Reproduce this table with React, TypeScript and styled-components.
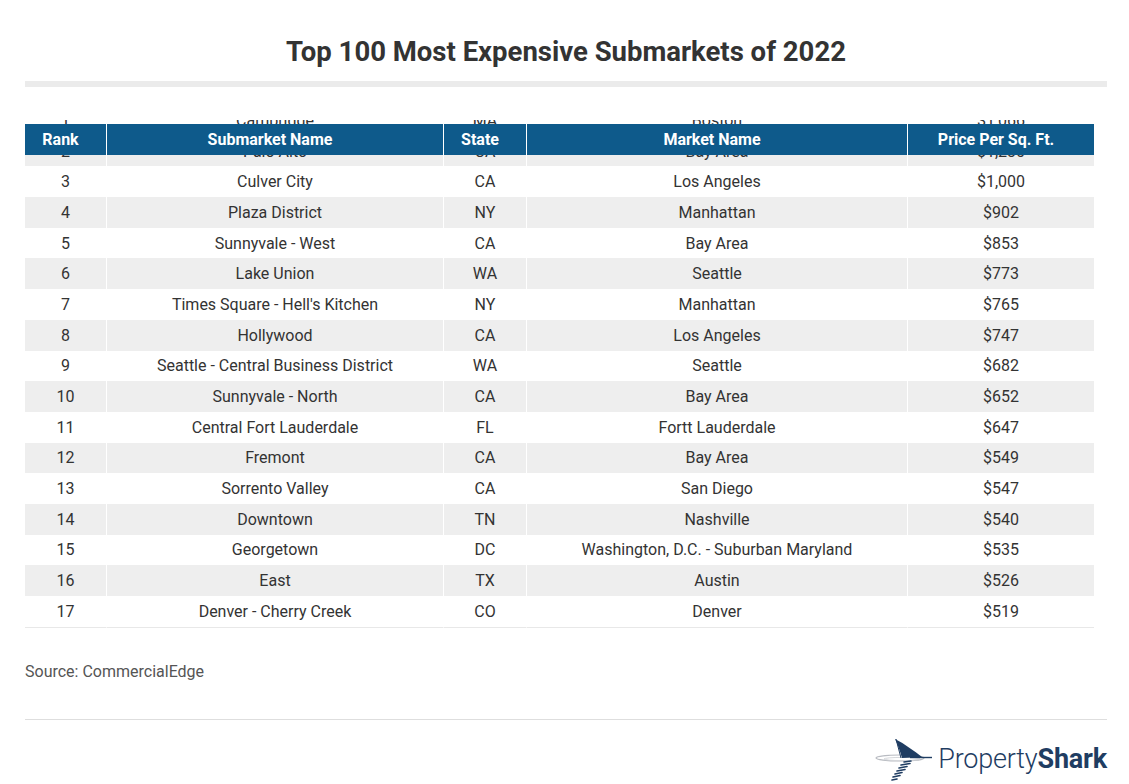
import { useLayoutEffect, useRef } from "react";
import styled, { createGlobalStyle } from "styled-components";

const GlobalStyle = createGlobalStyle`
  body {
    margin: 0;
    background: #fff;
    font-family: Roboto, "Liberation Sans", sans-serif;
    color: #333;
  }
`;

const Page = styled.div`
  width: 1082px;
  padding: 36px 22px 0 25px;
`;

const Title = styled.h1`
  margin: 0;
  font-size: 27.5px;
  line-height: 32px;
  font-weight: 700;
  text-align: center;
  color: #333;
`;

const TitleRule = styled.div`
  height: 6px;
  margin-top: 13px;
  background: #ebebeb;
`;

const Scroller = styled.div`
  margin-top: 33px;
  height: 508px;
  overflow-y: auto;
  scrollbar-width: none;
  &::-webkit-scrollbar {
    display: none;
  }
`;

const Table = styled.table`
  width: 1069px;
  table-layout: fixed;
  border-collapse: separate;
  border-spacing: 0;
  font-size: 16px;
`;

const HeadCell = styled.th`
  position: sticky;
  top: 4px;
  height: 31px;
  padding: 0 10px 0 0;
  background: #0e5a8b;
  color: #fff;
  font-weight: 700;
  text-align: center;
  border-left: 1px solid #fff;
  &:first-child {
    border-left: none;
  }
`;

const Row = styled.tr<{ $striped: boolean }>`
  background: ${(p) => (p.$striped ? "#eeeeee" : "#ffffff")};
`;

const Cell = styled.td<{ $last: boolean }>`
  height: 30.7px;
  padding: 0;
  text-align: center;
  color: #333;
  border-left: 1px solid #fff;
  border-bottom: ${(p) => (p.$last ? "1px solid #e8e8e8" : "none")};
  &:first-child {
    border-left: none;
  }
`;

const Source = styled.p`
  margin: 34px 0 0;
  font-size: 16px;
  line-height: 19px;
  color: #555;
`;

const FooterRule = styled.div`
  height: 1px;
  margin-top: 38px;
  background: #dedede;
`;

const Footer = styled.div`
  display: flex;
  justify-content: flex-end;
  padding-top: 18px;
`;

const Logo = styled.div`
  display: flex;
  align-items: center;
  gap: 4px;
  color: #1f3d62;
`;

const LogoText = styled.span`
  font-size: 27px;
  line-height: 27px;
  font-weight: 300;
  letter-spacing: -0.2px;
  margin-bottom: 4px;
  b {
    font-weight: 700;
  }
`;

const columns = [
  { label: "Rank", width: 81 },
  { label: "Submarket Name", width: 337 },
  { label: "State", width: 83 },
  { label: "Market Name", width: 381 },
  { label: "Price Per Sq. Ft.", width: 187 },
];

const rows: [number, string, string, string, string][] = [
  [1, "Cambridge", "MA", "Boston", "$1,066"],
  [2, "Palo Alto", "CA", "Bay Area", "$1,230"],
  [3, "Culver City", "CA", "Los Angeles", "$1,000"],
  [4, "Plaza District", "NY", "Manhattan", "$902"],
  [5, "Sunnyvale - West", "CA", "Bay Area", "$853"],
  [6, "Lake Union", "WA", "Seattle", "$773"],
  [7, "Times Square - Hell's Kitchen", "NY", "Manhattan", "$765"],
  [8, "Hollywood", "CA", "Los Angeles", "$747"],
  [9, "Seattle - Central Business District", "WA", "Seattle", "$682"],
  [10, "Sunnyvale - North", "CA", "Bay Area", "$652"],
  [11, "Central Fort Lauderdale", "FL", "Fortt Lauderdale", "$647"],
  [12, "Fremont", "CA", "Bay Area", "$549"],
  [13, "Sorrento Valley", "CA", "San Diego", "$547"],
  [14, "Downtown", "TN", "Nashville", "$540"],
  [15, "Georgetown", "DC", "Washington, D.C. - Suburban Maryland", "$535"],
  [16, "East", "TX", "Austin", "$526"],
  [17, "Denver - Cherry Creek", "CO", "Denver", "$519"],
];

const SharkMark = () => (
  <svg width="60" height="46" viewBox="0 0 60 46">
    <ellipse cx="26" cy="20" rx="24" ry="3" fill="none" stroke="#b9bcc2" strokeWidth="1.2" />
    <ellipse cx="28" cy="21" rx="18" ry="1.6" fill="none" stroke="#d5d7db" strokeWidth="1" />
    <path d="M21 1 C31 6 40 13 48 19 L28 20 C26 13 24 7 21 1 Z" fill="#1f3d62" />
    <path d="M22 1 L27 20" stroke="#1f3d62" strokeWidth="1" />
    <path d="M36 19.5 H58" stroke="#1f3d62" strokeWidth="1.4" />
    <g stroke="#1f3d62" strokeWidth="1.6" strokeLinecap="round">
      <path d="M30 24 L37 23" />
      <path d="M27 27 L36 25.5" />
      <path d="M25 30 L33 28.5" />
      <path d="M23 33 L31 31.5" />
      <path d="M21 36 L28 34.5" />
      <path d="M19 39 L26 37.5" />
      <path d="M18 42 L23 41" />
    </g>
  </svg>
);

export default function App() {
  const scroller = useRef<HTMLDivElement>(null);

  useLayoutEffect(() => {
    if (scroller.current) scroller.current.scrollTop = scroller.current.scrollHeight;
  }, []);

  return (
    <Page>
      <GlobalStyle />
      <Title>Top 100 Most Expensive Submarkets of 2022</Title>
      <TitleRule />
      <Scroller ref={scroller}>
        <Table>
          <colgroup>
            {columns.map((c) => (
              <col key={c.label} style={{ width: c.width }} />
            ))}
          </colgroup>
          <thead>
            <tr>
              {columns.map((c) => (
                <HeadCell key={c.label}>{c.label}</HeadCell>
              ))}
            </tr>
          </thead>
          <tbody>
            {rows.map((r, i) => (
              <Row key={r[0]} $striped={i % 2 === 1}>
                {r.map((v, j) => (
                  <Cell key={j} $last={i === rows.length - 1}>
                    {v}
                  </Cell>
                ))}
              </Row>
            ))}
          </tbody>
        </Table>
      </Scroller>
      <Source>Source: CommercialEdge</Source>
      <FooterRule />
      <Footer>
        <Logo>
          <SharkMark />
          <LogoText>
            Property<b>Shark</b>
          </LogoText>
        </Logo>
      </Footer>
    </Page>
  );
}
